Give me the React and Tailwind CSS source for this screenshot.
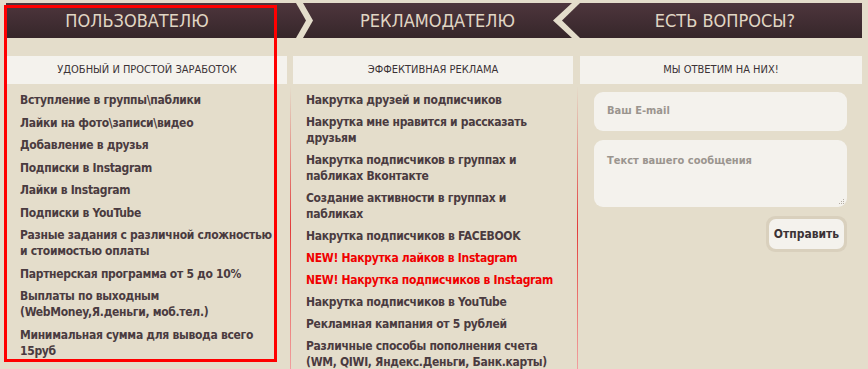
import React from 'react';

const userItems = [
    'Вступление в группы\\паблики',
    'Лайки на фото\\записи\\видео',
    'Добавление в друзья',
    'Подписки в Instagram',
    'Лайки в Instagram',
    'Подписки в YouTube',
    'Разные задания с различной сложностью и стоимостью оплаты',
    'Партнерская программа от 5 до 10%',
    'Выплаты по выходным (WebMoney,Я.деньги, моб.тел.)',
    'Минимальная сумма для вывода всего 15руб',
];

const adItems = [
    { text: 'Накрутка друзей и подписчиков' },
    { text: 'Накрутка мне нравится и рассказать друзьям' },
    { text: 'Накрутка подписчиков в группах и пабликах Вконтакте' },
    { text: 'Создание активности в группах и пабликах' },
    { text: 'Накрутка подписчиков в FACEBOOK' },
    { text: 'NEW! Накрутка лайков в Instagram', hot: true },
    { text: 'NEW! Накрутка подписчиков в Instagram', hot: true },
    { text: 'Накрутка подписчиков в YouTube' },
    { text: 'Рекламная кампания от 5 рублей' },
    { text: 'Различные способы пополнения счета (WM, QIWI, Яндекс.Деньги, Банк.карты)' },
];

const SubHeader = ({ children }) => (
    <div className="h-[28px] bg-[#f4f2ed] flex items-center justify-center text-[11px] text-[#3b3236] uppercase">
        {children}
    </div>
);

const Separator = () => (
    <div className="w-px self-stretch mt-[30px] bg-gradient-to-b from-transparent via-[#e23a3a] to-[#f0a0a0]" />
);

const App = () => {
    return (
        <div className="relative w-[868px] h-[369px] overflow-hidden bg-[#e4ddcb] font-['DejaVu_Sans_Condensed','DejaVu_Sans',sans-serif]">
            {/* top tabs */}
            <div className="flex pt-[3px] pl-[6px] h-[38px] text-[18px] text-[#e0d6c4]">
                <div className="w-[300px] h-[35px] flex items-center justify-center pr-[38px] bg-gradient-to-b from-[#4e363d] to-[#36262a] [clip-path:polygon(0_0,calc(100%-10px)_0,100%_50%,calc(100%-10px)_100%,0_100%)]">
                    ПОЛЬЗОВАТЕЛЮ
                </div>
                <div className="w-[269px] h-[35px] -ml-[3px] flex items-center justify-center bg-gradient-to-b from-[#4e363d] to-[#36262a] [clip-path:polygon(0_0,100%_0,calc(100%-19px)_50%,100%_100%,0_100%,10px_50%)]">
                    РЕКЛАМОДАТЕЛЮ
                </div>
                <div className="w-[300px] h-[35px] -ml-[10px] flex items-center justify-center pl-[26px] bg-gradient-to-b from-[#4e363d] to-[#36262a] [clip-path:polygon(18px_0,100%_0,100%_100%,18px_100%,0_50%)]">
                    ЕСТЬ ВОПРОСЫ?
                </div>
            </div>

            {/* columns */}
            <div className="flex pl-[7px] mt-[18px]">
                <div className="w-[280px]">
                    <SubHeader>Удобный и простой заработок</SubHeader>
                    <ul className="flex flex-col gap-[6.5px] pt-[8px] pl-[13px] pr-[13px] text-[12px] font-bold leading-[16px] tracking-[-0.3px] text-[#4a3b40]">
                        {userItems.map(t => <li key={t}>{t}</li>)}
                    </ul>
                </div>
                <div className="w-[3px]" />
                <Separator />
                <div className="w-[2px]" />
                <div className="w-[280px]">
                    <SubHeader>Эффективная реклама</SubHeader>
                    <ul className="flex flex-col gap-[6px] pt-[8px] pl-[13px] pr-[13px] text-[12px] font-bold leading-[16px] tracking-[-0.3px] text-[#4a3b40]">
                        {adItems.map(i => (
                            <li key={i.text} className={i.hot ? 'text-[#f00000]' : ''}>{i.text}</li>
                        ))}
                    </ul>
                </div>
                <div className="w-[4px]" />
                <Separator />
                <div className="w-[2px]" />
                <div className="w-[282px]">
                    <SubHeader>Мы ответим на них!</SubHeader>
                    <div className="flex flex-col items-end pt-[8px] pl-[14px] pr-[15px]">
                        <div className="w-full h-[39px] rounded-[9px] bg-[#f4f2ed] flex items-center px-[13px] text-[11px] font-bold text-[#9b958f]">
                            Ваш E-mail
                        </div>
                        <div className="relative w-full h-[67px] mt-[9px] rounded-[9px] bg-[#f4f2ed] px-[13px] pt-[13px] text-[11px] font-bold text-[#9b958f]">
                            Текст вашего сообщения
                            <svg className="absolute right-[2px] bottom-[2px]" width="6" height="6" viewBox="0 0 6 6">
                                <rect x="4" y="0" width="1" height="1" fill="#b5aea6" />
                                <rect x="2" y="2" width="1" height="1" fill="#b5aea6" />
                                <rect x="4" y="2" width="1" height="1" fill="#b5aea6" />
                                <rect x="0" y="4" width="1" height="1" fill="#b5aea6" />
                                <rect x="2" y="4" width="1" height="1" fill="#b5aea6" />
                                <rect x="4" y="4" width="1" height="1" fill="#b5aea6" />
                            </svg>
                        </div>
                        <div className="mt-[9px] w-[81px] h-[36px] rounded-[9px] bg-[#d9d0bd] p-[3px]">
                            <div className="w-full h-full rounded-[7px] bg-[#f4f2ed] flex items-center justify-center text-[12px] font-bold text-[#3b3236]">
                                Отправить
                            </div>
                        </div>
                    </div>
                </div>
            </div>

            {/* red annotation frame */}
            <div className="absolute left-[4px] top-[5px] w-[273px] h-[357px] border-[3px] border-[#ff0000] pointer-events-none" />
        </div>
    );
};

export default App;
